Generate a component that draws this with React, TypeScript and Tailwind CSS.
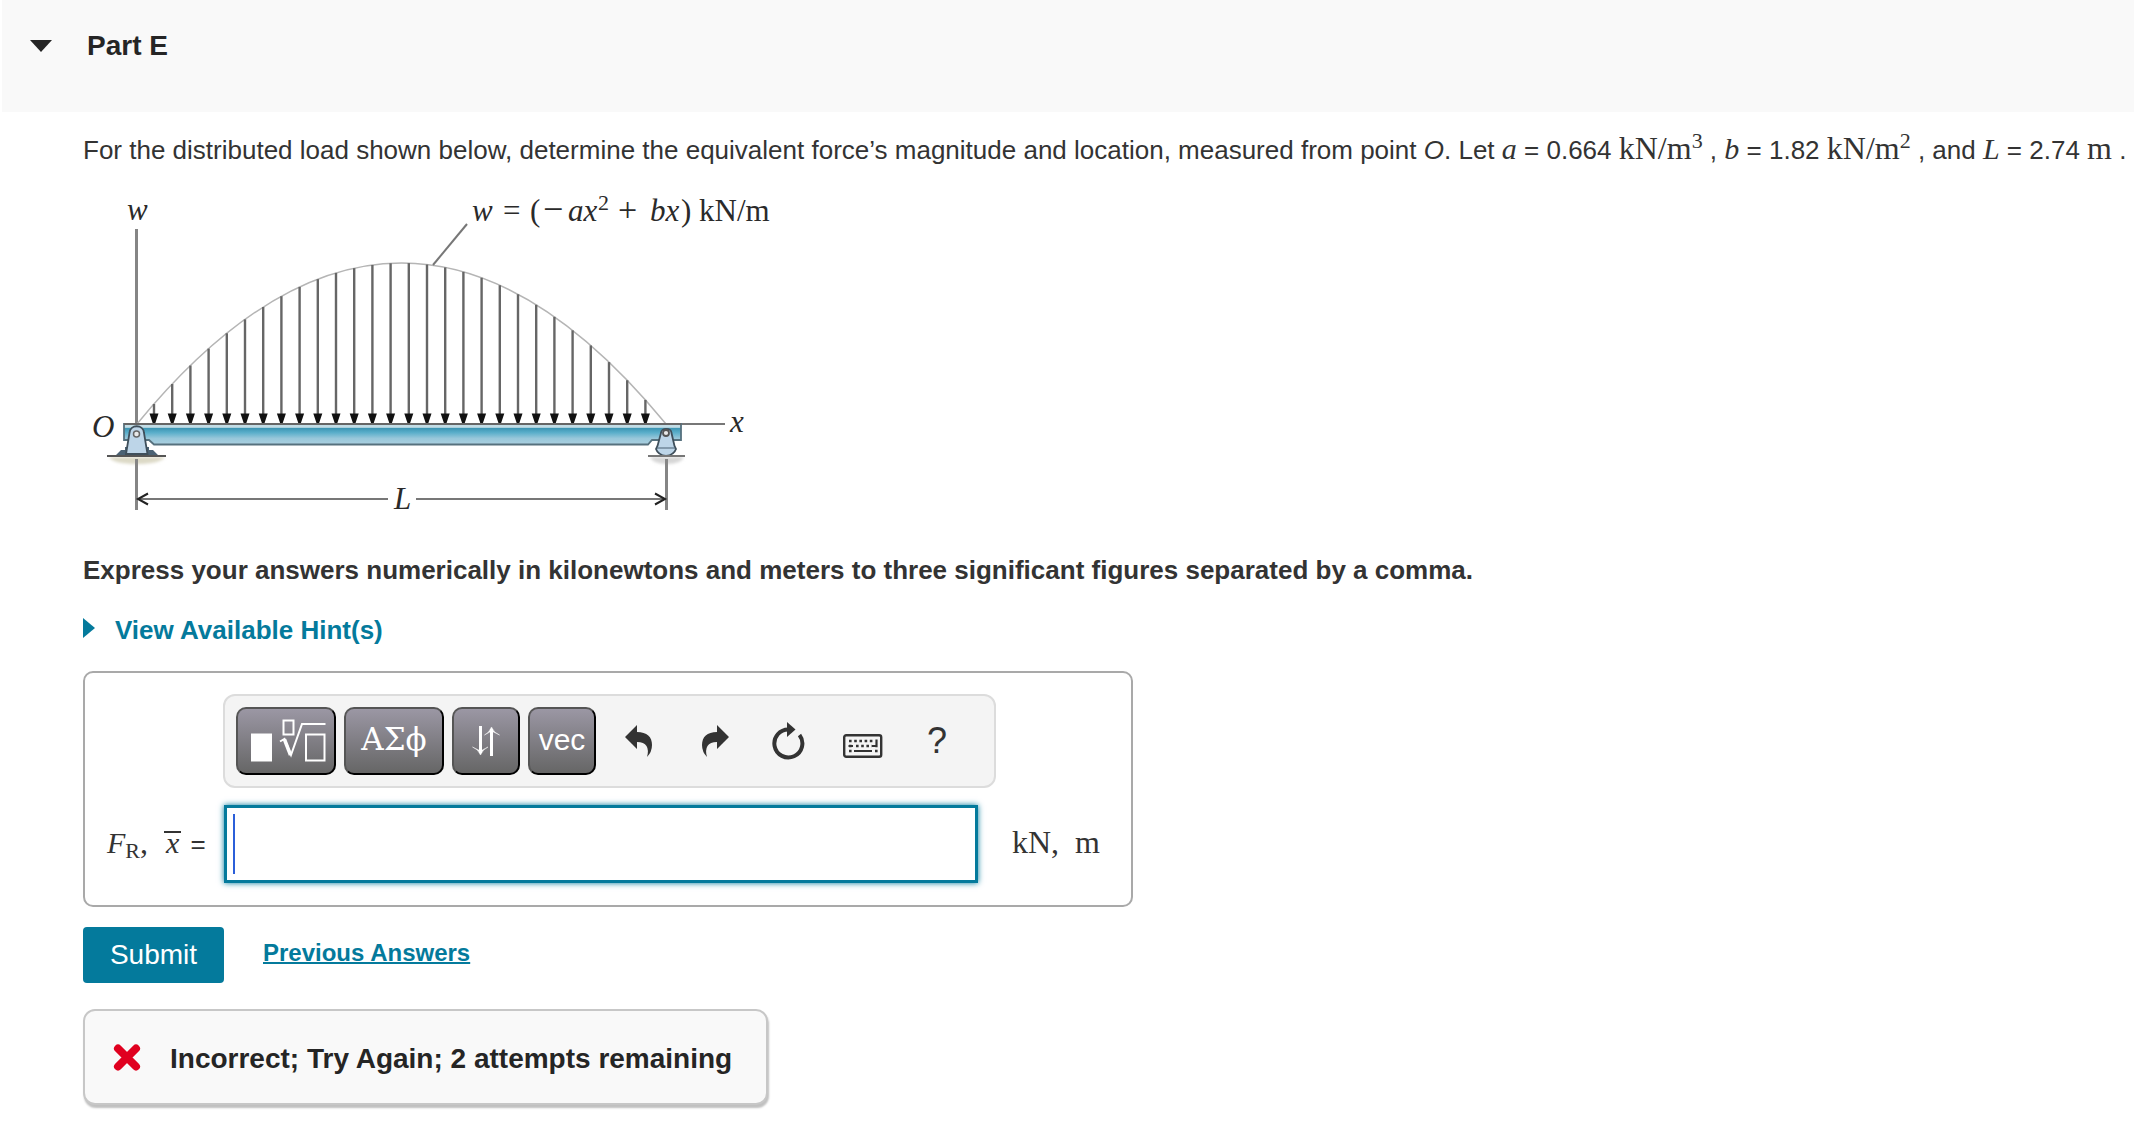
import type { ReactNode } from 'react';

/**
 * Part E - distributed load problem.
 *
 * 1. Header bar with the collapse toggle
 * 2. Problem statement and beam figure
 * 3. Answer box (math toolbar + input)
 * 4. Submit row and feedback
 */

const BEAM_START = 137;
const BEAM_END = 666;
const BEAM_TOP = 424;
const PEAK = 161;

// height of the load curve above the beam at x
const loadTop = (x: number) => {
  const t = (x - BEAM_START) / (BEAM_END - BEAM_START);
  return BEAM_TOP - 4 * PEAK * t * (1 - t);
};

const arrows = Array.from({ length: 28 }, (_, i) => 154 + i * 18.2);

function Unit({ children }: { children: ReactNode }) {
  return <span className="font-['Liberation_Serif',serif] text-[32px] leading-none">{children}</span>;
}

function Var({ children }: { children: ReactNode }) {
  return <i className="font-['Liberation_Serif',serif] text-[30px] leading-none">{children}</i>;
}

function Power({ children }: { children: ReactNode }) {
  return <sup className="font-['Liberation_Serif',serif] text-[22px]">{children}</sup>;
}

function BeamFigure() {
  return (
    <svg
      className="block h-[332px] w-[700px] font-['Liberation_Serif',serif]"
      viewBox="83 188 700 332"
      role="img"
      aria-label="Beam with a parabolic distributed load"
    >
      <defs>
        <linearGradient id="beam" x1="0" y1="0" x2="0" y2="1">
          <stop offset="0" stopColor="#c3dde6" />
          <stop offset="0.16" stopColor="#c3dde6" />
          <stop offset="0.22" stopColor="#3f97b5" />
          <stop offset="0.42" stopColor="#5aaeca" />
          <stop offset="0.7" stopColor="#98c7da" />
          <stop offset="1" stopColor="#abd0e0" />
        </linearGradient>
        <filter id="soft" x="-20%" y="-50%" width="140%" height="200%">
          <feGaussianBlur stdDeviation="1.5" />
        </filter>
      </defs>

      {/* axes */}
      <path d="M136.5 229V424" stroke="#858585" strokeWidth="3" />
      <path d="M681 424H725" stroke="#777" strokeWidth="2" />

      {/* load curve */}
      <path
        d={`M${BEAM_START} ${BEAM_TOP}Q${(BEAM_START + BEAM_END) / 2} ${BEAM_TOP - 2 * PEAK} ${BEAM_END} ${BEAM_TOP}`}
        fill="none"
        stroke="#b5b5b5"
        strokeWidth="1.5"
      />
      {arrows.map((x) => (
        <g key={x}>
          <path d={`M${x} ${loadTop(x)}V416`} stroke="#666" strokeWidth="2.4" />
          <path d={`M${x - 4.5} 413.5H${x + 4.5}L${x + 1} 424H${x - 1}Z`} fill="#111" />
        </g>
      ))}
      <path d="M467 224L433 265" stroke="#777" strokeWidth="2" />

      {/* beam */}
      <path
        d="M124 424H681V440H652L648 444.5H154L149 440H124Z"
        fill="url(#beam)"
        stroke="#56717e"
        strokeWidth="1.8"
      />
      <path d="M124 424H681" stroke="#666" strokeWidth="2" />

      {/* pin support */}
      <path d="M109 457H165Q160 464 137 464Q113 464 109 457Z" fill="#dcd9c6" filter="url(#soft)" />
      <path d="M115 456L121 450H125V447H149V450H153L159 456Z" fill="#4b6274" />
      <path
        d="M126 454L129.5 433C130 424 143.5 424 144 433L147.5 454Z"
        fill="#bdd5e8"
        stroke="#3f4f5b"
        strokeWidth="1.8"
      />
      <circle cx="136.5" cy="434" r="3" fill="#e9e9e9" stroke="#666" strokeWidth="1.5" />
      <path d="M107 456H166" stroke="#555" strokeWidth="1.8" />

      {/* roller support */}
      <path d="M650 457H684Q681 464 667 464Q653 464 650 457Z" fill="#d5d5d5" filter="url(#soft)" />
      <path
        d="M661 433C661 427.5 671 427.5 671.5 433L674.5 446L676 449Q674 455 666 456Q658 455 656 449L657.5 446Z"
        fill="#bdd5e8"
        stroke="#3f4f5b"
        strokeWidth="1.8"
      />
      <path d="M657 448H675" stroke="#5d7485" strokeWidth="1.2" />
      <circle cx="666" cy="433" r="3" fill="#e9e9e9" stroke="#555" strokeWidth="1.8" />
      <path d="M648 456H685" stroke="#777" strokeWidth="1.8" />

      {/* span dimension */}
      <path d="M136.5 459V510M666.5 459V510" stroke="#858585" strokeWidth="3" />
      <path d="M140 499H388M416 499H663" stroke="#777" strokeWidth="2" />
      <path d="M148 493.5L138 499L148 504.5M655 493.5L665 499L655 504.5" fill="none" stroke="#222" strokeWidth="2" />

      <g fill="#2a2a2a" fontSize="31">
        <g fontStyle="italic">
          <text x="127" y="220">w</text>
          <text x="92" y="437">O</text>
          <text x="730" y="432">x</text>
          <text x="394" y="509">L</text>
          <text x="472" y="221">w</text>
          <text x="568" y="221">ax</text>
          <text x="650" y="221">bx</text>
        </g>
        <text x="503" y="221">=</text>
        <text x="530" y="221">(</text>
        <text x="543" y="221" fontSize="36">−</text>
        <text x="598" y="210" fontSize="22">2</text>
        <text x="618" y="221" fontSize="34">+</text>
        <text x="681" y="221">)</text>
        <text x="699" y="221">kN/m</text>
      </g>
    </svg>
  );
}

const keyClass =
  'flex h-[68px] items-center justify-center rounded-[10px] border-2 border-t-[#555] border-l-[#555] border-r-black border-b-black bg-linear-to-b from-[#9b97a4] to-[#666] text-white';

const toolClass = 'flex h-[68px] w-[74px] items-center justify-center text-[#333]';

function Toolbar() {
  return (
    <div className="flex w-[773px] items-center gap-2 rounded-xl border-2 border-[#dcdcdc] bg-[#f4f4f4] p-[11px]">
      <button type="button" aria-label="Templates" className={`${keyClass} w-[100px]`}>
        <svg width="80" height="44" viewBox="-2 0 80 44" fill="none" stroke="#fff">
          <path d="M3 14.500H24V42.500H3Z" fill="#fff" stroke="none" />
          <path d="M35.500 1.500H45.500V15.500H35.500Z" strokeWidth="2" />
          <path d="M32 22.500L36.500 20L43 36L54 5H77.500" strokeWidth="2" />
          <path d="M36.500 20.500L42.500 36" strokeWidth="3.500" />
          <path d="M58 15.500H76.500V41.500H58Z" strokeWidth="2" />
        </svg>
      </button>
      <button
        type="button"
        aria-label="Symbols"
        className={`${keyClass} w-[100px] pb-1 font-['DejaVu_Serif',serif] text-[31px]`}
      >
        ΑΣϕ
      </button>
      <button type="button" aria-label="Swap" className={`${keyClass} w-[68px]`}>
        <svg width="28" height="32" viewBox="0 0 28 32" fill="none" stroke="#fff" strokeWidth="3">
          <path d="M8.500 1V28M19.500 31V4" />
          <path
            d="M0.500 22Q6 24 8.500 30Q11 24 16 22L8.500 26ZM12.500 10Q17 8 19.500 2Q22 8 27.500 10L19.500 6Z"
            fill="#fff"
            strokeWidth="0.500"
          />
        </svg>
      </button>
      <button
        type="button"
        className={`${keyClass} w-[68px] pb-1 font-['Liberation_Sans',sans-serif] text-[30px]`}
      >
        vec
      </button>
      <div className="flex">
        <button type="button" aria-label="Undo" className={`${toolClass} pr-1`}>
          <svg width="28" height="34" viewBox="0 0 28 34" fill="currentColor">
            <path d="M0 13L12 1V8C22 8 27 13 27 21Q27 28 22 33Q24 26 21.500 22Q19 18 12 18V25Z" />
          </svg>
        </button>
        <button type="button" aria-label="Redo" className={toolClass}>
          <svg width="28" height="34" viewBox="0 0 28 34" fill="currentColor">
            <path d="M28 13L16 1V8C6 8 1 13 1 21Q1 28 6 33Q4 26 6.500 22Q9 18 16 18V25Z" />
          </svg>
        </button>
        <button type="button" aria-label="Reset" className={`${toolClass} pr-0.5`}>
          <svg width="34" height="38" viewBox="0 0 34 38">
            <path d="M18 7.500A14 14 0 1 0 28.500 13" fill="none" stroke="currentColor" strokeWidth="4" />
            <path d="M16 0L24.500 7.500L16 15Z" fill="currentColor" />
          </svg>
        </button>
        <button type="button" aria-label="Keyboard" className={`${toolClass} pt-2.5`}>
          <svg width="40" height="24" viewBox="0 0 40 24" fill="none" stroke="currentColor">
            <rect x="1.200" y="1.200" width="37" height="21.500" rx="2" strokeWidth="2.400" />
            <path d="M6 7H31M6 12H10M13 12H29M6 17H9M32 17H35" strokeWidth="2.400" strokeDasharray="2.600 2.600" />
            <path d="M33.500 5.500V13.200M29 12H34.600M5.500 12H10M11 17H29" strokeWidth="2.200" />
          </svg>
        </button>
        <button
          type="button"
          aria-label="Help"
          className={`${toolClass} font-['Liberation_Sans',sans-serif] text-[36px]`}
        >
          ?
        </button>
      </div>
    </div>
  );
}

export default function App() {
  return (
    <div className="min-h-screen bg-white pl-0.5 font-['Liberation_Sans',sans-serif] text-[26px] text-[#333]">
      {/* header */}
      <header className="mr-2 h-28 bg-[#f9f9f9] pt-7 pl-7">
        <button type="button" className="flex items-center text-[28px] leading-9 font-bold text-[#252525]">
          <svg width="22" height="12" viewBox="0 0 22 12" fill="currentColor">
            <path d="M0 0H22L11 12Z" />
          </svg>
          <span className="ml-[35px]">Part E</span>
        </button>
      </header>

      <main className="pl-[81px]">
        {/* problem statement */}
        <p className="mt-2.5 h-[66px] leading-[56px] whitespace-nowrap">
          For the distributed load shown below, determine the equivalent force’s magnitude and location, measured from
          point <i>O</i>. Let <Var>a</Var> = 0.664 <Unit>kN/m</Unit>
          <Power>3</Power> , <Var>b</Var> = 1.82 <Unit>kN/m</Unit>
          <Power>2</Power> , and <Var>L</Var> = 2.74 <Unit>m</Unit> .
        </p>
        <BeamFigure />

        <p className="mt-8 leading-9 font-bold">
          Express your answers numerically in kilonewtons and meters to three significant figures separated by a comma.
        </p>
        <button type="button" className="mt-6 flex items-center leading-9 font-bold text-[#047a9c]">
          <svg className="mb-1" width="12" height="20" viewBox="0 0 12 20" fill="currentColor">
            <path d="M0 0L12 10L0 20Z" />
          </svg>
          <span className="ml-5">View Available Hint(s)</span>
        </button>

        {/* answer box */}
        <section className="mt-[23px] w-[1050px] rounded-[10px] border-2 border-[#a9a9a9] pt-[21px] pb-[22px]">
          <div className="ml-[138px]">
            <Toolbar />
          </div>
          <div className="mt-[17px] flex items-center">
            <label htmlFor="answer" className="w-[139px] pl-[22px] whitespace-nowrap">
              <Var>F</Var>
              <sub className="font-['Liberation_Serif',serif] text-[22px]">R</sub>
              <Unit>,</Unit>
              <i className="mr-0.5 ml-4 inline-block border-t-2 border-[#333] px-0.5 font-['Liberation_Serif',serif] text-[30px] leading-5">
                x
              </i>{' '}
              =
            </label>
            <div className="flex h-[78px] w-[754px] items-center border-[3px] border-[#047a9c] pl-1.5 shadow-[0_0_6px_#047a9c]">
              <span className="h-[60px] w-0.5 bg-[#2b5fd9]" />
              <input id="answer" type="text" className="h-full flex-1 outline-none" />
            </div>
            <span className="ml-[34px]">
              <Unit>kN,&nbsp; m</Unit>
            </span>
          </div>
        </section>

        {/* submit row */}
        <div className="mt-5 flex items-center">
          <button type="submit" className="h-14 w-[141px] rounded bg-[#047a9c] text-[28px] text-white">
            Submit
          </button>
          <a href="#previous" className="ml-[39px] pb-1 text-[24px] font-bold text-[#047a9c] underline decoration-2">
            Previous Answers
          </a>
        </div>

        {/* feedback */}
        <div
          role="status"
          className="mt-[26px] flex h-[96px] w-[685px] items-center rounded-xl border-2 border-[#c7c7c7] bg-[#f9f9f9] pt-1 pl-7 text-[28px] font-bold text-[#252525] shadow-[1px_3px_2px_#c0c0c0]"
        >
          <svg
            className="mb-1"
            width="28"
            height="27"
            viewBox="0 0 28 27"
            fill="none"
            stroke="#e0001f"
            strokeWidth="8"
            strokeLinecap="round"
          >
            <path d="M5 4.500L23 22.500M23 4.500L5 22.500" />
          </svg>
          <span className="ml-[29px]">Incorrect; Try Again; 2 attempts remaining</span>
        </div>
      </main>
    </div>
  );
}
